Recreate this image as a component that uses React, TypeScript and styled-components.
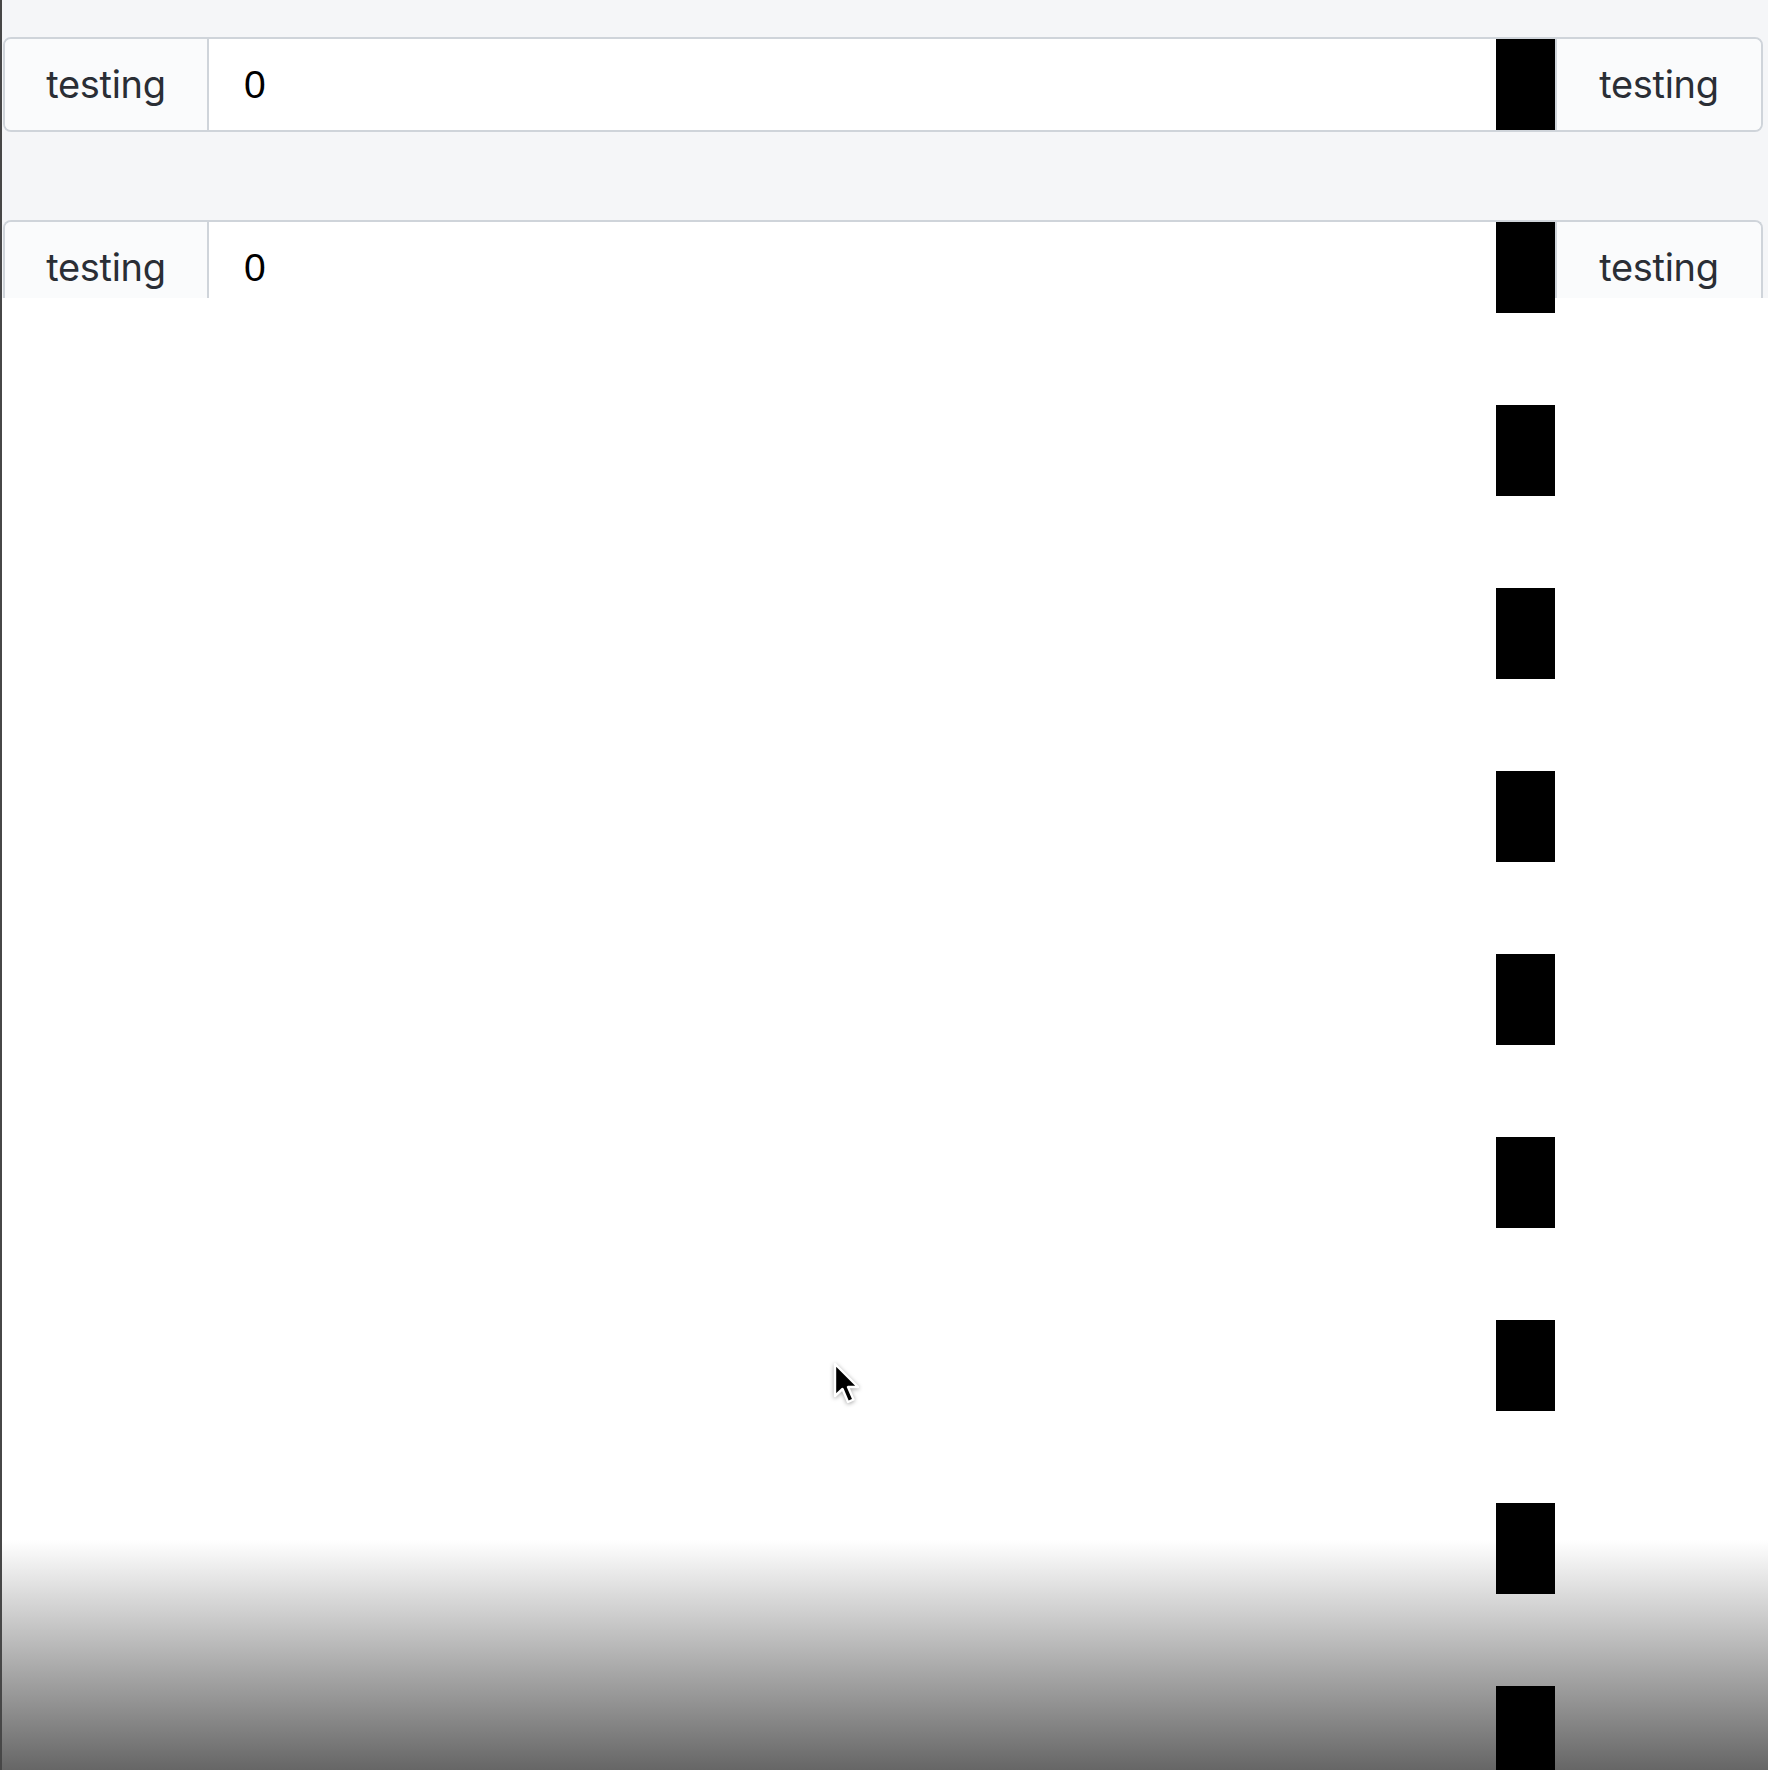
import React from "react";
import styled, { createGlobalStyle, css } from "styled-components";

type Variant = "full" | "cut" | "ghost";

const ROWS: Variant[] = [
  "full",
  "cut",
  "ghost",
  "ghost",
  "ghost",
  "ghost",
  "ghost",
  "ghost",
  "ghost",
  "ghost",
];

export default function App() {
  return (
    <>
      <GlobalStyle />
      <Page>
        <List>
          {ROWS.map((variant, index) => (
            <Group key={index} $variant={variant}>
              <Addon $variant={variant} $side="left">
                testing
              </Addon>
              <Field $variant={variant}>0</Field>
              <Handle />
              <Addon $variant={variant} $side="right">
                testing
              </Addon>
            </Group>
          ))}
        </List>
        {/* 마우스 커서 */}
        <Cursor viewBox="0 0 26 44" width="26" height="44">
          <path
            d="M2 2 L2 34 L9.5 27 L15 40 L20.5 37.5 L15 25 L25 25 Z"
            fill="#000"
            stroke="#fff"
            strokeWidth="2.4"
            strokeLinejoin="round"
          />
        </Cursor>
      </Page>
    </>
  );
}

const GlobalStyle = createGlobalStyle`
  html, body {
    margin: 0;
    padding: 0;
    background: #ffffff;
  }
  body {
    font-family: Inter, "Noto Sans", sans-serif;
  }
`;

const Page = styled.div`
  position: relative;
  width: 1768px;
  height: 1770px;
  box-sizing: border-box;
  overflow: hidden;
  border-left: 2px solid #474747;
  padding: 37px 5px 0 1px;
  background: linear-gradient(
    to bottom,
    #f5f6f8 0px,
    #f5f6f8 298px,
    #ffffff 298px,
    #ffffff 1540px,
    #666666 1770px
  );
`;

const List = styled.div`
  display: flex;
  flex-direction: column;
  gap: 88px;
`;

const Group = styled.div<{ $variant: Variant }>`
  display: flex;
  align-items: flex-start;
  height: 95px;
  box-sizing: border-box;
  border: 2px solid #cfd4da;
  border-radius: 8px;

  ${({ $variant }) =>
    $variant === "cut" &&
    css`
      height: 78px;
      margin-bottom: 17px;
      border-bottom: none;
      border-bottom-left-radius: 0;
      border-bottom-right-radius: 0;
    `}

  ${({ $variant }) =>
    $variant === "ghost" &&
    css`
      border-color: transparent;
    `}
`;

const Addon = styled.div<{ $variant: Variant; $side: "left" | "right" }>`
  box-sizing: border-box;
  height: ${({ $variant }) => ($variant === "cut" ? "76px" : "91px")};
  overflow: hidden;
  width: ${({ $side }) => ($side === "left" ? "204px" : "206px")};
  text-align: center;
  line-height: 91px;
  background: #fafbfc;
  color: #2a2e35;
  font-size: 38px;
  letter-spacing: -0.3px;
  ${({ $side }) =>
    $side === "left"
      ? css`
          border-right: 2px solid #cfd4da;
          border-radius: 6px 0 0 6px;
        `
      : css`
          border-left: 2px solid #cfd4da;
          border-radius: 0 6px 6px 0;
        `}
  ${({ $variant }) =>
    $variant === "cut" &&
    css`
      border-bottom-left-radius: 0;
      border-bottom-right-radius: 0;
    `}
  visibility: ${({ $variant }) => ($variant === "ghost" ? "hidden" : "visible")};
`;

const Field = styled.div<{ $variant: Variant }>`
  flex: 1;
  box-sizing: border-box;
  height: ${({ $variant }) => ($variant === "cut" ? "76px" : "91px")};
  overflow: hidden;
  line-height: 91px;
  padding-left: 35px;
  background: #ffffff;
  color: #000000;
  font-family: "Liberation Sans", Arial, sans-serif;
  font-size: 39px;
  visibility: ${({ $variant }) => ($variant === "ghost" ? "hidden" : "visible")};
`;

const Handle = styled.div`
  flex: none;
  width: 59px;
  height: 91px;
  background: #000000;
`;

const Cursor = styled.svg`
  position: absolute;
  left: 831px;
  top: 1362px;
  filter: drop-shadow(0 1px 2px rgba(0, 0, 0, 0.35));
`;
